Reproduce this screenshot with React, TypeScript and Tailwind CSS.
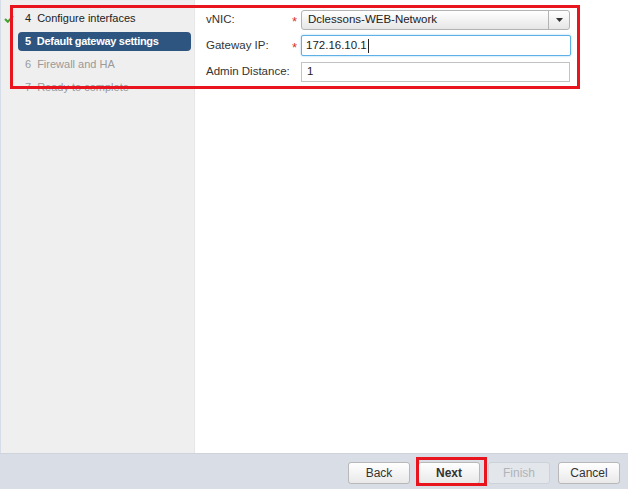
import React from "react";

export default function App() {
  const font = { fontFamily: '"Liberation Sans", Arial, sans-serif' };
  return (
    <div
      className="relative w-[628px] h-[489px] flex flex-col bg-white overflow-hidden text-[12px]"
      style={font}
    >
      <div className="flex flex-1 min-h-0">
        {/* sidebar */}
        <div className="w-[195px] bg-[#efefef] border-l border-[#d5dde8] border-r border-r-[#e6e6e6] pt-[9px] flex flex-col gap-[4px] text-[11px]">
          <div className="relative h-[19px] flex items-center pl-[24px] text-[#222]">
            <svg className="absolute left-[3px] top-[6px]" width="10" height="8" viewBox="0 0 10 8">
              <path d="M1 4 L3.8 6.8 L9 1" stroke="#3fa22f" strokeWidth="2" fill="none" />
            </svg>
            <span className="mr-[6px]">4</span>
            <span>Configure interfaces</span>
          </div>
          <div className="ml-[17px] mr-[3px] h-[19px] rounded-[4px] bg-[#2d5580] flex items-center pl-[7px] text-white font-bold tracking-[-0.3px]">
            <span className="mr-[6px]">5</span>
            <span>Default gateway settings</span>
          </div>
          <div className="h-[19px] flex items-center pl-[24px] text-[#9a9a9a]">
            <span className="mr-[6px]">6</span>
            <span>Firewall and HA</span>
          </div>
          <div className="h-[19px] flex items-center pl-[24px] text-[#9a9a9a]">
            <span className="mr-[6px]">7</span>
            <span>Ready to complete</span>
          </div>
        </div>
        {/* content */}
        <div className="flex-1 bg-white pt-[9px] pl-[11px] flex flex-col gap-[5px] text-[#333] text-[11.5px]">
          <div className="flex items-center h-[21px]">
            <span className="w-[86px]">vNIC:</span>
            <span className="w-[9px] text-[#d9322c] text-[13px] leading-none pt-[3px]">*</span>
            <div className="w-[269px] h-[20px] border border-[#b3b3b3] rounded-[3px] bg-gradient-to-b from-white to-[#e6e6e6] flex items-center">
              <span className="flex-1 pl-[6px] text-[#222]">Dclessons-WEB-Network</span>
              <div className="w-[21px] h-full border-l border-[#b3b3b3] flex items-center justify-center">
                <svg width="7" height="4" viewBox="0 0 7 4">
                  <path d="M0 0 H7 L3.5 4 Z" fill="#333" />
                </svg>
              </div>
            </div>
          </div>
          <div className="flex items-center h-[21px]">
            <span className="w-[86px]">Gateway IP:</span>
            <span className="w-[9px] text-[#d9322c] text-[13px] leading-none pt-[3px]">*</span>
            <div className="w-[270px] h-[21px] border border-[#5fb0e6] rounded-[2px] shadow-[0_0_2px_#8cc8f0] bg-white flex items-center pl-[4px] text-[#222]">
              172.16.10.1<span className="inline-block w-px h-[14px] bg-[#222] ml-px" />
            </div>
          </div>
          <div className="flex items-center h-[21px]">
            <span className="w-[95px]">Admin Distance:</span>
            <div className="w-[269px] h-[20px] border border-[#c3c3c3] bg-white flex items-center pl-[5px] text-[#222]">
              1
            </div>
          </div>
        </div>
      </div>
      {/* footer */}
      <div className="h-[36px] bg-[#d9dde5] border-t border-[#cfd4dc] flex items-center justify-end pr-[8px] gap-[8px] pt-[2px]">
        <button className="w-[62px] h-[22px] rounded-[3px] border border-[#b8b8b8] bg-gradient-to-b from-white to-[#e9e9e9] text-[#333] text-[12px]">
          Back
        </button>
        <button className="w-[62px] h-[22px] rounded-[3px] border border-[#b8b8b8] bg-gradient-to-b from-white to-[#e9e9e9] text-[#333] text-[12px] font-bold">
          Next
        </button>
        <button className="w-[62px] h-[22px] rounded-[3px] border border-[#cdd2d8] bg-[#e3e6ea] text-[#b0b4b9] text-[12px]">
          Finish
        </button>
        <button className="w-[62px] h-[22px] rounded-[3px] border border-[#b8b8b8] bg-gradient-to-b from-white to-[#e9e9e9] text-[#333] text-[12px]">
          Cancel
        </button>
      </div>
      {/* annotations */}
      <div className="absolute left-[10px] top-[5px] w-[570px] h-[84px] border-[3px] border-[#e8141e] pointer-events-none" />
      <div className="absolute left-[416px] top-[457px] w-[71px] h-[29px] border-[3px] border-[#e8141e] pointer-events-none" />
    </div>
  );
}
